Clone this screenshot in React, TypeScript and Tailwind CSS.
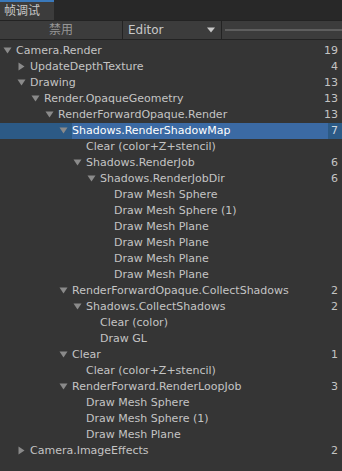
import React from 'react'

type Row = { label: string; level: number; arrow?: 'down' | 'right'; count?: number; selected?: boolean }

const rows: Row[] = [
  { label: 'Camera.Render', level: 0, arrow: 'down', count: 19 },
  { label: 'UpdateDepthTexture', level: 1, arrow: 'right', count: 4 },
  { label: 'Drawing', level: 1, arrow: 'down', count: 13 },
  { label: 'Render.OpaqueGeometry', level: 2, arrow: 'down', count: 13 },
  { label: 'RenderForwardOpaque.Render', level: 3, arrow: 'down', count: 13 },
  { label: 'Shadows.RenderShadowMap', level: 4, arrow: 'down', count: 7, selected: true },
  { label: 'Clear (color+Z+stencil)', level: 5 },
  { label: 'Shadows.RenderJob', level: 5, arrow: 'down', count: 6 },
  { label: 'Shadows.RenderJobDir', level: 6, arrow: 'down', count: 6 },
  { label: 'Draw Mesh Sphere', level: 7 },
  { label: 'Draw Mesh Sphere (1)', level: 7 },
  { label: 'Draw Mesh Plane', level: 7 },
  { label: 'Draw Mesh Plane', level: 7 },
  { label: 'Draw Mesh Plane', level: 7 },
  { label: 'Draw Mesh Plane', level: 7 },
  { label: 'RenderForwardOpaque.CollectShadows', level: 4, arrow: 'down', count: 2 },
  { label: 'Shadows.CollectShadows', level: 5, arrow: 'down', count: 2 },
  { label: 'Clear (color)', level: 6 },
  { label: 'Draw GL', level: 6 },
  { label: 'Clear', level: 4, arrow: 'down', count: 1 },
  { label: 'Clear (color+Z+stencil)', level: 5 },
  { label: 'RenderForward.RenderLoopJob', level: 4, arrow: 'down', count: 3 },
  { label: 'Draw Mesh Sphere', level: 5 },
  { label: 'Draw Mesh Sphere (1)', level: 5 },
  { label: 'Draw Mesh Plane', level: 5 },
  { label: 'Camera.ImageEffects', level: 1, arrow: 'right', count: 2 },
]

const Arrow = ({ dir }: { dir: 'down' | 'right' }) => (
  <svg width="9" height="9" viewBox="0 0 9 9" className="shrink-0">
    {dir === 'down' ? <path d="M0.5 1.5 L8.5 1.5 L4.5 7.5 Z" fill="#8a8a8a" /> : <path d="M1.5 0.5 L7.5 4.5 L1.5 8.5 Z" fill="#8a8a8a" />}
  </svg>
)

const TreeRow = ({ row }: { row: Row }) => {
  const pad = 16 + row.level * 14
  return (
    <div className={`flex h-4 items-center ${row.selected ? 'bg-[#2c5a86]' : ''}`}>
      <div className="relative flex h-4 flex-1 items-center" style={{ paddingLeft: pad }}>
        {row.arrow && (
          <div className="absolute top-[3px]" style={{ left: pad - 13 }}>
            <Arrow dir={row.arrow} />
          </div>
        )}
        <span className={`whitespace-nowrap leading-4 ${row.selected ? 'bg-[#3b6aa4] flex-1 text-white' : 'text-[#c4c4c4]'}`}>{row.label}</span>
      </div>
      <div className={`flex w-[14px] justify-end whitespace-nowrap pr-[4px] leading-4 ${row.selected ? 'text-[#d0d8e0]' : 'text-[#c4c4c4]'}`}>
        <span>{row.count ?? ''}</span>
      </div>
    </div>
  )
}

export default function App() {
  return (
    <div className="h-[471px] w-[342px] overflow-hidden bg-[#353535] text-[11px]" style={{ fontFamily: '"DejaVu Sans", "Noto Sans CJK SC", sans-serif' }}>
      <div className="flex h-[20px] bg-[#282828]">
        <div className="flex w-[54px] flex-col bg-[#3c3c3c]">
          <div className="h-[2px] bg-[#3a79bb]" />
          <div className="flex flex-1 items-center pl-[4px] text-[12px] text-[#c8c8c8]">帧调试</div>
        </div>
      </div>
      <div className="flex h-[20px] border-t border-[#232323] bg-[#3c3c3c] border-b border-b-[#232323]">
        <div className="flex w-[123px] items-center justify-center border-r border-[#232323] text-[12px] text-[#969696]">禁用</div>
        <div className="flex w-[99px] items-center justify-between border-r border-[#232323] pl-[5px] pr-[6px] text-[12px] text-[#c8c8c8]">
          <span>Editor</span>
          <svg width="8" height="6" viewBox="0 0 8 6"><path d="M0 0.5 L8 0.5 L4 5.5 Z" fill="#c8c8c8" /></svg>
        </div>
        <div className="flex flex-1 items-center pl-[3px]">
          <div className="h-[2px] w-full bg-[#5e5e5e]" />
        </div>
      </div>
      <div className="pt-[3px]">
        {rows.map((r, i) => (
          <TreeRow key={i} row={r} />
        ))}
      </div>
    </div>
  )
}
